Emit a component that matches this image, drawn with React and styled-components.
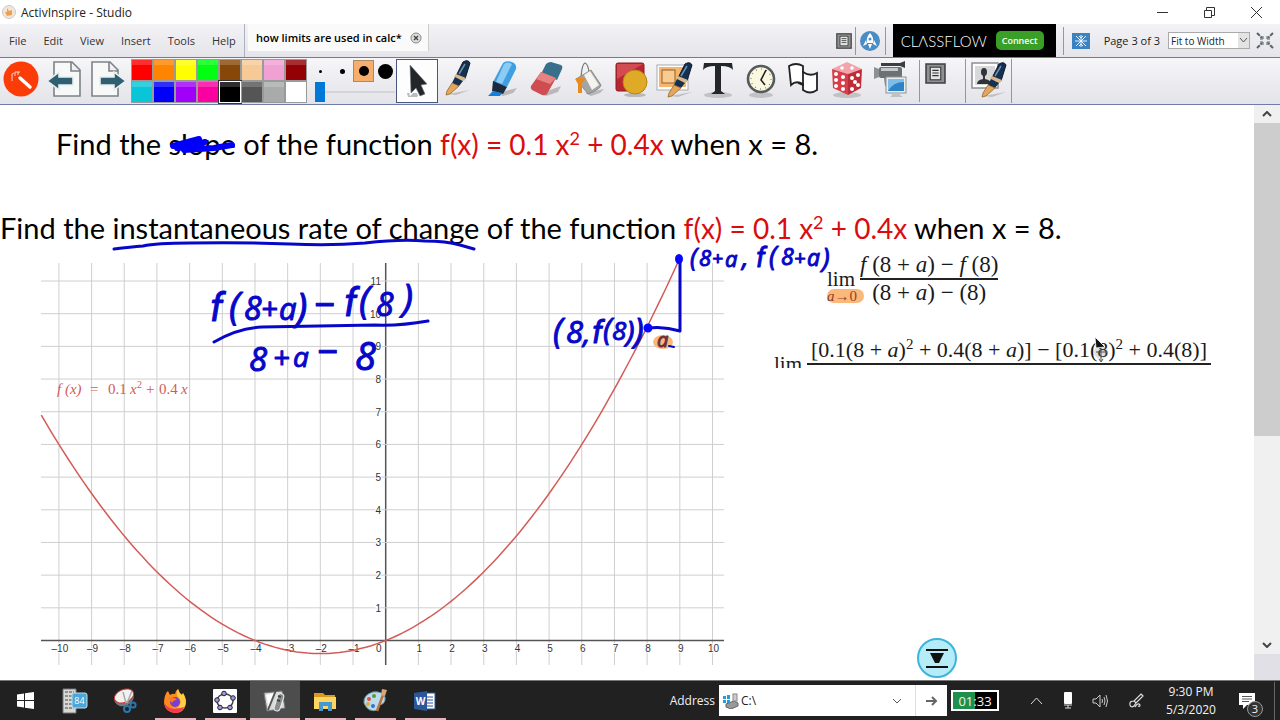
import React from 'react';
import styled, { createGlobalStyle } from 'styled-components';

const GlobalStyle = createGlobalStyle`
  * {
    box-sizing: border-box;
  }

  body {
    margin: 0;
    font-family: "Open Sans", "Noto Sans", sans-serif;
    font-size: 12px;
    color: #222;
    background: #fff;
  }

  button {
    font: inherit;
    color: inherit;
    padding: 0;
    border: 0;
    background: none;
  }

  svg {
    display: block;
    flex: none;
  }
`;

const SWATCHES = [
  '#ff0000', '#ff8500', '#ffff00', '#00ff10', '#874708', '#f6ca96', '#f0a0d2', '#930006',
  '#08c6d8', '#0000fa', '#a000fa', '#fa00a0', '#000000', '#555555', '#a9abaa', '#ffffff',
];

// graph geometry, in board coordinates
const UNIT = 32.68;
const OX = 385.7;
const OY = 640.5;
const gx = (x) => OX + x * UNIT;
const gy = (y) => OY - y * UNIT;
const f = (x) => 0.1 * x * x + 0.4 * x;

const range = (from, to) => Array.from({ length: to - from + 1 }, (_, i) => from + i);

const curve = range(0, 120)
  .map((i) => {
    const x = -10.54 + (i / 120) * 19.54;
    return `${gx(x).toFixed(1)},${gy(f(x)).toFixed(1)}`;
  })
  .join(' ');

/* ---------- toolbar icons ---------- */

const PenShape = () => (
  <g>
    <path d="M6 35 L28 31 L14 36 Z" fill="#999" opacity=".5" />
    <path d="M21 3 Q26 0 28 4 L23 20 L14 17 Z" fill="#16304f" stroke="#0c1b30" />
    <path d="M23 5 L17 15" stroke="#6f8fb0" strokeWidth="1.5" />
    <path d="M14 15 L24 19 L22 22 L12 18 Z" fill="#d9b98a" />
    <path d="M13 18 L21 22 L17 27 L10 24 Z" fill="#16304f" />
    <path d="M10 24 L17 27 L8 35 L4 36 L5 32 Z" fill="#e2a75c" stroke="#8c5a20" strokeWidth=".7" />
  </g>
);

const SettingsIcon = () => (
  <svg width="36" height="36" viewBox="0 0 36 36">
    <circle cx="18" cy="18" r="17.5" fill="#fb3c07" />
    <path d="M17 17 L27 26" stroke="#fff" strokeWidth="3.5" strokeLinecap="round" />
    <path d="M9 20 V13 M12 15 V11 M12 11 H17 M15 14 V11 M9 13 L11 12" stroke="#ffd9c8" fill="none" />
  </svg>
);

const PageIcon = ({ next }) => (
  <svg width="38" height="38" viewBox="0 0 38 38">
    <path
      d="M8 2 H26 L34 10 V36 H8 Z M25 2 V11 H34"
      transform={next ? 'translate(-5 0)' : undefined}
      fill="#f7f8f8" stroke="#7d8385" strokeWidth="1.6"
    />
    <path
      d={next ? 'M11 17 H25 V12 L37 21 L25 30 V25 H11 Z' : 'M27 17 H13 V12 L1 21 L13 30 V25 H27 Z'}
      fill="#2f6072" stroke="#e8eef0" strokeWidth="1.6"
    />
  </svg>
);

const PointerIcon = () => (
  <svg width="36" height="40" viewBox="0 0 36 40">
    <path d="M8 33 L22 33 L18 37 L9 37 Z" fill="#bbb" />
    <path d="M11 5 L28 24 L22 25 L26 34 L21 36 L17 28 L12 33 Z" fill="#22262a" stroke="#fff" strokeWidth="3" />
    <path d="M11 5 L28 24 L22 25 L26 34 L21 36 L17 28 L12 33 Z" fill="#22262a" stroke="#777" strokeWidth=".6" />
  </svg>
);

const PenIcon = () => <svg width="36" height="40" viewBox="0 0 36 40"><PenShape /></svg>;

const HighlighterIcon = () => (
  <svg width="36" height="40" viewBox="0 0 36 40">
    <path d="M12 34 L32 29 L28 34 L18 37 Z" fill="#999" opacity=".6" />
    <path d="M18 4 Q21 1 27 3 Q32 5 31 10 L22 28 L8 23 Z" fill="#3f9fe0" />
    <path d="M19 5 Q23 2 27 5 L17 25 L11 23 Z" fill="#8ccbf5" />
    <path d="M8 22 L22 28 L18 35 L7 32 Z" fill="#1c2a3c" />
    <path d="M3 37 L8 32 L17 34 L15 37 Z" fill="#1680d8" />
  </svg>
);

const EraserIcon = () => (
  <svg width="36" height="40" viewBox="0 0 36 40">
    <path d="M14 34 L33 27 L30 33 L18 37 Z" fill="#999" opacity=".6" />
    <path d="M18 5 Q20 3 23 3 L33 6 Q35 7 34 10 L29 21 L13 15 Z" fill="#38708c" />
    <path d="M13 13 L28 19 L19 35 Q17 37 14 36 L4 31 Q2 29 3 27 Z" fill="#cf4c50" />
    <path d="M13 13 L28 19 L22 25 L8 20 Z" fill="#e68382" />
  </svg>
);

const FillIcon = () => (
  <svg width="36" height="40" viewBox="0 0 36 40">
    <path d="M14 34 L33 30 L29 34 L20 37 Z" fill="#999" opacity=".6" />
    <path d="M10 18 Q11 5 14 4 Q17 5 18 13" fill="none" stroke="#777" strokeWidth="1.2" />
    <path d="M5 20 L20 11 L30 26 Q30 30 17 35 Z" fill="#a4a5a3" stroke="#777" strokeWidth=".7" />
    <path d="M13 16 L19 12 L28 26 L21 31 Z" fill="#f3f3f0" />
    <path d="M4 20 Q10 17 15 20 L11 24 L11 34 L7 34 L7 25 Z" fill="#e88b1c" />
  </svg>
);

const ShapesIcon = () => (
  <svg width="36" height="40" viewBox="0 0 36 40">
    <rect x="2" y="4" width="28" height="28" rx="2" fill="#b92630" stroke="#8f1a22" />
    <path d="M3 5 H29 L3 20 Z" fill="#d34b51" />
    <ellipse cx="21" cy="36" rx="11" ry="2" fill="#999" opacity=".6" />
    <circle cx="21" cy="23" r="12" fill="#deaa28" stroke="#b98414" />
  </svg>
);

const DrawShapeIcon = () => (
  <svg width="38" height="40" viewBox="0 0 38 40">
    <rect x="1" y="6" width="31" height="25" fill="#fff" stroke="#aaa" />
    <rect x="3" y="8" width="27" height="20" fill="#f6b56a" />
    <rect x="6" y="11" width="13" height="13" fill="#fbca8f" stroke="#8b622f" />
    <g transform="translate(8 2)"><PenShape /></g>
  </svg>
);

const TextToolIcon = () => (
  <svg width="36" height="40" viewBox="0 0 36 40">
    <ellipse cx="18" cy="36" rx="14" ry="3" fill="#aaa" opacity=".6" />
    <path d="M4 4 H32 L33 11 Q30 7 21 7 V32 L25 35 H11 L15 32 V7 Q6 7 3 11 Z" fill="#23272b" />
  </svg>
);

const ClockIcon = () => (
  <svg width="36" height="40" viewBox="0 0 36 40">
    <ellipse cx="18" cy="36" rx="12" ry="3" fill="#aaa" opacity=".6" />
    <circle cx="18" cy="20" r="13" fill="#fbf8e0" stroke="#555b5c" strokeWidth="2.6" />
    <circle cx="18" cy="20" r="10" fill="none" stroke="#988" strokeWidth="1.3" strokeDasharray="1 4.2" />
    <path d="M23 11 L18 21 L22 26" fill="none" stroke="#222" strokeWidth="1.6" />
  </svg>
);

const FlagIcon = () => (
  <svg width="36" height="40" viewBox="0 0 36 40">
    <path d="M3 7 Q10 3 17 7 V13 Q24 18 31 14 V31 Q24 36 17 31 V25 Q10 21 5 26 Z" fill="#fff" stroke="#222" strokeWidth="1.8" />
    <path d="M17 12 V26 L12 24" fill="none" stroke="#222" strokeWidth="1.8" />
  </svg>
);

const DiceIcon = () => (
  <svg width="36" height="40" viewBox="0 0 36 40">
    <ellipse cx="18" cy="36" rx="14" ry="3" fill="#aaa" opacity=".6" />
    <path d="M3 10 L18 3 L33 10 L19 15 Z" fill="#f2a4ac" />
    <path d="M3 10 L19 15 V36 L4 29 Z" fill="#d63f49" />
    <path d="M33 10 L19 15 V36 L32 29 Z" fill="#bf2c38" />
    <g fill="#fff">
      <circle cx="13" cy="9" r="1.8" /><circle cx="23" cy="9" r="1.8" />
      <circle cx="7" cy="15" r="2" /><circle cx="14" cy="18" r="2" />
      <circle cx="7" cy="21" r="2" /><circle cx="14" cy="24" r="2" />
      <circle cx="7" cy="27" r="2" /><circle cx="14" cy="30" r="2" />
      <circle cx="23" cy="19" r="2" /><circle cx="29" cy="16" r="2" />
      <circle cx="26" cy="23" r="2" /><circle cx="23" cy="30" r="2" /><circle cx="29" cy="26" r="2" />
    </g>
  </svg>
);

const CameraIcon = () => (
  <svg width="36" height="40" viewBox="0 0 36 40">
    <path d="M2 8 L7 10 V18 L2 20 Z" fill="#8d9192" />
    <rect x="7" y="8" width="23" height="11" rx="2" fill="#6c7172" />
    <rect x="9" y="9" width="17" height="3" fill="#c6c9c9" />
    <path d="M9 4 H28 L33 2 V9 L28 7 H9 Z" fill="#3b3f41" />
    <path d="M12 19 H20 L17 27 H13 Z" fill="#83898a" />
    <rect x="14" y="18" width="20" height="16" fill="#e8ecee" stroke="#8d9396" />
    <rect x="16" y="20" width="16" height="12" fill="#2d83c8" />
    <path d="M16 32 Q21 23 32 23 V20 H16 Z" fill="#7fbce8" />
    <path d="M20 34 H28 V36 L31 38 H18 L20 36 Z" fill="#bcc2c5" />
  </svg>
);

const NotesIcon = ({ size }) => (
  <svg width={size} height={size} viewBox="0 0 20 20">
    <rect x="1" y="1" width="18" height="18" fill="#8f9192" stroke="#46484a" strokeWidth="1.6" />
    <rect x="5" y="4" width="10" height="12" fill="#e4e5e5" stroke="#333" />
    <path d="M7 7 H13 M7 9.5 H13 M7 12 H13" stroke="#333" />
  </svg>
);

const PortraitIcon = () => (
  <svg width="38" height="40" viewBox="0 0 38 40">
    <rect x="2" y="4" width="26" height="25" fill="#fff" stroke="#8c9092" strokeWidth="1.5" />
    <rect x="5" y="7" width="20" height="19" fill="#d6d8d9" />
    <ellipse cx="14" cy="13" rx="3" ry="4" fill="#2f3335" />
    <path d="M7 25 Q7 21 13 20 V16 H15 V20 Q21 21 21 25 Z" fill="#2f3335" />
    <g transform="translate(8 2)"><PenShape /></g>
  </svg>
);

const TOOLS = [
  ['Pen', PenIcon], ['Highlighter', HighlighterIcon], ['Eraser', EraserIcon], ['Fill', FillIcon],
  ['Shapes', ShapesIcon], ['Draw shape', DrawShapeIcon], ['Text', TextToolIcon], ['Clock', ClockIcon],
  ['Flag', FlagIcon], ['Dice', DiceIcon], ['Camera', CameraIcon],
];

/* ---------- window chrome ---------- */

const Window = styled.div`
  display: flex;
  flex-direction: column;
  min-height: 100vh;
  overflow: hidden;
`;

const TitleBar = styled.header`
  display: flex;
  align-items: center;
  height: 24px;
  padding-left: 2px;
  gap: 5px;
  background: #fff;
`;

const WindowButtons = styled.div`
  display: flex;
  margin-left: auto;
`;

const WindowButton = styled.button`
  display: grid;
  place-items: center;
  width: 47px;
  height: 24px;
`;

const MenuRow = styled.div`
  display: flex;
  height: 34px;
  background: linear-gradient(#f3f3f6, #e4e4ea);
  border-bottom: 1px solid #6f7c99;
`;

const Menu = styled.nav`
  display: flex;
  align-items: center;
  gap: 1px;
  width: 245px;
  padding-left: 1px;
  border-right: 1px solid #aab0c0;
`;

const MenuItem = styled.button`
  padding: 0 8px;
  height: 30px;
  color: #333;
  font-size: 11px;
`;

const DocTab = styled.div`
  display: flex;
  align-items: center;
  gap: 8px;
  height: 27px;
  margin-left: 3px;
  padding: 0 6px 0 8px;
  background: #fafafb;
  border-right: 1px solid #ccc;
  font-weight: 600;
  font-size: 11px;
  color: #000;
`;

const MenuRight = styled.div`
  display: flex;
  align-items: center;
  margin-left: auto;
`;

const IconButton = styled.button`
  display: grid;
  place-items: center;
  width: ${(p) => p.$w || 30}px;
  height: 32px;
`;

const Divider = styled.span`
  flex: none;
  width: 1px;
  height: ${(p) => p.$h || 28}px;
  background: #8d97ae;
`;

const ClassFlow = styled.div`
  display: flex;
  align-items: center;
  justify-content: space-between;
  width: 163px;
  height: 33px;
  margin: 0 7px;
  padding: 0 12px 0 8px;
  background: #000;
  color: #fff;
  font-family: Lato, sans-serif;
  font-size: 15px;
  font-weight: 300;
`;

const Connect = styled.button`
  width: 48px;
  height: 19px;
  border-radius: 5px;
  background: #3a9f27;
  color: #fff;
  font-family: "Open Sans", sans-serif;
  font-size: 9px;
  font-weight: 600;
`;

const PageLabel = styled.span`
  margin: 0 8px 0 6px;
  font-size: 11px;
  white-space: nowrap;
`;

const ZoomBox = styled.div`
  position: relative;
  display: flex;

  svg {
    position: absolute;
    right: 1px;
    top: 1px;
    pointer-events: none;
  }
`;

const ZoomSelect = styled.select`
  appearance: none;
  width: 82px;
  height: 17px;
  padding: 0 2px;
  border: 1px solid #aaa;
  border-radius: 0;
  background: #fff;
  font-family: "Open Sans", sans-serif;
  font-size: 10px;
  line-height: 14px;
  color: #222;
`;

const Toolbar = styled.div`
  display: flex;
  align-items: center;
  height: 47px;
  background: linear-gradient(#f6f6f8, #e3e3e9);
  border-bottom: 1px solid #6f7ca8;
`;

const ToolGroup = styled.div`
  display: flex;
  margin-right: ${(p) => p.$gap || 0}px;
`;

const ToolButton = styled.button`
  display: grid;
  place-items: ${(p) => (p.$top ? 'start center' : 'center')};
  width: ${(p) => p.$w || 43}px;
  height: 44px;
  padding: ${(p) => (p.$top ? '4px 0 0' : '0 0 4px')};
  border: ${(p) => (p.$active ? '1px solid #4b5680' : '0')};
  background: ${(p) => (p.$active ? '#fdfdfe' : 'none')};
`;

const Palette = styled.div`
  display: grid;
  grid-template-columns: repeat(8, 22px);
  grid-auto-rows: 22px;
  margin-left: 4px;
`;

const Swatch = styled.button`
  border: 1px solid ${(p) => (p.$selected ? '#fff' : '#9a9a9a')};
  outline: ${(p) => (p.$selected ? '1px solid #333' : '0')};
  background: linear-gradient(#ffffff2e 0 25%, transparent 25%) ${(p) => p.$color};
`;

const PenWidths = styled.div`
  display: flex;
  flex-direction: column;
  width: 86px;
  margin-left: 3px;
`;

const Dots = styled.div`
  display: flex;
  justify-content: space-between;
`;

const DotButton = styled.button`
  display: grid;
  place-items: center;
  width: 21px;
  height: 22px;
  border: ${(p) => (p.$active ? '1px solid #a98a68' : '0')};
  background: ${(p) => (p.$active ? '#f5ae6c' : 'none')};

  &::before {
    content: "";
    width: ${(p) => p.$size}px;
    height: ${(p) => p.$size}px;
    border-radius: 50%;
    background: #000;
  }
`;

const WidthSlider = styled.input`
  appearance: none;
  width: 80px;
  height: 20px;
  margin: 0 0 0 5px;
  background: linear-gradient(transparent 9px, #d3d5da 9px 11px, transparent 11px);

  &::-webkit-slider-thumb {
    appearance: none;
    width: 10px;
    height: 20px;
    background: #0078d7;
  }
`;

/* ---------- board ---------- */

const Workspace = styled.main`
  display: flex;
  flex: 1;
  min-height: 575px;
`;

const Board = styled.section`
  position: relative;
  flex: 1;
  min-width: 0;
  overflow: hidden;
  background: #fff;
`;

const BoardItem = styled.div`
  position: absolute;
  left: ${(p) => p.$x}px;
  top: ${(p) => p.$y}px;
`;

const Prompt = styled.p`
  margin: 0;
  font-family: Lato, "Open Sans", sans-serif;
  font-size: 29px;
  line-height: 36px;
  color: #000;
  white-space: nowrap;

  sup {
    font-size: 18px;
    line-height: 0;
  }
`;

const Red = styled.span`
  font-size: 28px;
  color: #d90d0d;
`;

const Drawing = styled.svg`
  position: absolute;
  left: 0;
  top: 0;
  pointer-events: none;
`;

const Equation = styled.div`
  display: flex;
  align-items: ${(p) => (p.$clipped ? 'flex-start' : 'center')};
  overflow: hidden;
  font-family: "Liberation Serif", serif;
  font-size: ${(p) => (p.$clipped ? 22 : 23)}px;
  line-height: ${(p) => (p.$clipped ? 27 : 26)}px;
  color: #1a1a1a;
  white-space: pre;
  height: ${(p) => (p.$clipped ? '32px' : 'auto')};

  sup {
    font-size: 15px;
    line-height: 0;
  }
`;

const Limit = styled.div`
  display: flex;
  flex-direction: column;
  align-items: flex-start;
  width: 33px;
  font-size: 21px;
  line-height: 20px;
  padding-top: ${(p) => p.$drop}px;
`;

const Approach = styled.span`
  padding-right: 7px;
  border-radius: 7px;
  background: #fcb878;
  color: #93402a;
  font-size: 15px;
  line-height: 14px;
`;

const Fraction = styled.div`
  display: flex;
  flex-direction: column;
  text-align: center;
`;

const Over = styled.span`
  padding: 0 ${(p) => p.$pad || 0}px;
  border-bottom: 2px solid #222;
`;

const PullTab = styled.button`
  position: absolute;
  left: 916px;
  bottom: 1px;
`;

const ScrollBar = styled.div`
  display: flex;
  flex-direction: column;
  align-items: center;
  width: 26px;
  background: #f0f0f0;
`;

const ScrollArrow = styled.button`
  display: grid;
  place-items: center;
  width: 26px;
  height: 18px;
`;

const ScrollTrack = styled.div`
  flex: 1;
  width: 100%;
`;

const ScrollThumb = styled.div`
  height: 61%;
  background: #cdcdcd;
`;

const Corner = styled.div`
  width: 100%;
  height: 26px;
  background: #e0e0e6;
`;

const Graph = () => (
  <>
    {range(-10, 10).map((n) => (
      <line key={`v${n}`} x1={gx(n)} x2={gx(n)} y1="263" y2="665" stroke={n ? '#cfcfcf' : '#555'} strokeWidth={n ? 1 : 1.5} />
    ))}
    {range(0, 11).map((n) => (
      <line key={`h${n}`} x1="41" x2="724" y1={gy(n)} y2={gy(n)} stroke={n ? '#cfcfcf' : '#555'} strokeWidth={n ? 1 : 1.5} />
    ))}
    <g fontFamily="Liberation Sans, sans-serif" fontSize="10" fill="#333" stroke="#fff" strokeWidth="2" paintOrder="stroke">
      {range(-10, 10).map((n) => (
        <text key={n} x={n ? gx(n) + 1 : gx(n) - 7} y="652" textAnchor="middle">{String(n).replace('-', '–')}</text>
      ))}
      {range(1, 11).map((n) => (
        <text key={n} x="381" y={gy(n) + 4} textAnchor="end">{n}</text>
      ))}
    </g>
    <polyline points={curve} fill="none" stroke="#d35b57" strokeWidth="1.5" />
    <text x="57" y="394" fontFamily="Liberation Serif, serif" fontSize="15" fontStyle="italic" fill="#d35b57">
      f (x)
      <tspan x="90" fontStyle="normal">=</tspan>
      <tspan x="108" fontStyle="normal">0.1</tspan>
      <tspan x="130">x</tspan>
      <tspan x="137" y="388" fontSize="10" fontStyle="normal">2</tspan>
      <tspan x="146" y="394" fontStyle="normal">+</tspan>
      <tspan x="159" fontStyle="normal">0.4</tspan>
      <tspan x="181">x</tspan>
    </text>
  </>
);

// handwritten notes: [x, baseline, size, text]
const NOTES = [
  [210, 321, 38, 'f'], [229, 320, 39, '('], [244, 320, 32, '8'], [261, 319, 29, '+'], [279, 320, 31, 'a'], [296, 322, 40, ')'],
  [314, 318, 38, '−'],
  [344, 316, 38, 'f'], [359, 314, 39, '('], [376, 316, 32, '8'], [402, 312, 39, ')'],
  [249, 371, 33, '8'], [273, 368, 29, '+'], [293, 367, 28, 'a'],
  [317, 365, 38, '−'],
  [355, 370, 38, '8'],
  [553, 343, 34, '('], [566, 343, 31, '8'], [583, 343, 30, ','], [592, 343, 31, 'f'], [603, 340, 31, '('],
  [612, 340, 26, '8'], [626, 342, 30, ')'], [634, 343, 34, ')'],
  [690, 266, 25, '('], [699, 266, 22, '8'], [712, 265, 19, '+'], [725, 267, 22, 'a'], [742, 267, 26, ','],
  [756, 267, 27, 'f'], [769, 266, 27, '('], [781, 265, 23, '8'], [794, 265, 20, '+'], [807, 266, 23, 'a'], [822, 268, 27, ')'],
];

const Ink = () => (
  <g fill="none" stroke="#0707c9" strokeLinecap="round" strokeLinejoin="round" strokeWidth="3">
    <path d="M173 146 L199 139 L177 148 L205 142 L184 150 L214 148 L232 145" strokeWidth="6" stroke="#0000fa" />
    <path d="M114 249 Q131 247 143 246 Q156 243 190 243 Q240 242 290 244 Q330 246 365 243 Q400 239 425 241 Q446 241 460 245 L474 249" />
    <path d="M214 342 Q238 328 262 327 Q320 326 375 325 Q400 326 428 321" />
    <path d="M648 328 Q664 326 680 331 L680 260" />
    <ellipse cx="679" cy="259" rx="3" ry="4" fill="#0707ff" stroke="#0707ff" strokeWidth="2" />
    <ellipse cx="648" cy="328" rx="3" ry="3" fill="#0707ff" stroke="#0707ff" />
    <ellipse cx="663" cy="342" rx="10" ry="7" fill="#fcb878" stroke="none" />
    <path d="M669 346 L674 347" strokeWidth="2" />
    <g fontFamily="Open Sans, sans-serif" fontStyle="italic" fill="#0707c9" strokeWidth="1">
      {NOTES.map(([x, y, size, text]) => (
        <text key={`${x}-${y}`} x={x} y={y} fontSize={size} fontFamily={text === 'f' ? 'Roboto, sans-serif' : undefined}>{text}</text>
      ))}
      <text x="657" y="347" fontSize="20" fill="#6c3042" stroke="#6c3042">a</text>
    </g>
  </g>
);

const BoardCursor = () => (
  <g>
    <circle cx="1101" cy="352" r="7" fill="#888" opacity=".25" />
    <path d="M1096 352 H1107 M1101 348 V361 M1099 359 L1101 362 L1103 359" stroke="#555" fill="none" />
    <path d="M1095 337 L1105 347 L1096 348 Z" fill="#111" stroke="#fff" strokeWidth=".8" />
  </g>
);

/* ---------- taskbar ---------- */

const TaskBar = styled.footer`
  display: flex;
  align-items: center;
  height: 40px;
  background: #212121;
  border-top: 1px solid #777;
  color: #f2f2f2;
`;

const TaskButton = styled.button`
  display: grid;
  place-items: center;
  width: 50px;
  height: 39px;
  background: ${(p) => (p.$active ? '#4d4d4d' : 'none')};
  box-shadow: ${(p) => (p.$active ? 'inset 0 -2px #efb7c1' : 'none')};
  background-image: ${(p) => (p.$open ? 'linear-gradient(#e9b3bd, #e9b3bd)' : 'none')};
  background-size: 41px 2px;
  background-position: center bottom;
  background-repeat: no-repeat;
`;

const Address = styled.label`
  display: flex;
  align-items: center;
  gap: 4px;
  margin-left: auto;
`;

const AddressBox = styled.span`
  display: flex;
  align-items: center;
  width: 228px;
  height: 31px;
  padding-left: 3px;
  gap: 2px;
  background: #fff;
  color: #222;
`;

const AddressInput = styled.input`
  flex: 1;
  min-width: 0;
  border: 0;
  padding: 0;
  background: none;
  font: inherit;
  color: #222;
`;

const GoButton = styled.button`
  display: grid;
  place-items: center;
  width: 32px;
  height: 31px;
  border-left: 1px solid #ddd;
`;

const Battery = styled.div`
  display: grid;
  place-items: center;
  width: 48px;
  height: 21px;
  margin: 0 21px 0 4px;
  border: 2px solid #fff;
  background: linear-gradient(90deg, #1f8f4c 50%, #000 50%);
  font-size: 13px;
  line-height: 16px;
`;

const Tray = styled.div`
  display: flex;
  align-items: center;
`;

const Clock = styled.div`
  width: 72px;
  text-align: center;
  font-size: 12px;
  line-height: 18px;
`;

const Badge = styled.span`
  position: absolute;
  right: 11px;
  bottom: 3px;
  width: 16px;
  height: 16px;
  border: 1px solid #999;
  border-radius: 50%;
  background: #333;
  font-size: 11px;
  line-height: 14px;
`;

const NoticeButton = styled.button`
  position: relative;
  display: flex;
  align-items: center;
  width: 42px;
  height: 38px;
  padding-left: 5px;
  margin: 0 5px 0 6px;
  border-right: 1px solid #666;
`;

const TASKS = [
  ['Start', '', (
    <svg width="17" height="17" viewBox="0 0 17 17"><path d="M0 2.4 L7 1.4 V8 H0 Z M8 1.2 L17 0 V8 H8 Z M0 9 H7 V15.6 L0 14.6 Z M8 9 H17 V17 L8 15.8 Z" fill="#fff" /></svg>
  )],
  ['TI-84', '', (
    <svg width="26" height="26" viewBox="0 0 26 26">
      <path d="M1 1 H14 V25 H1 Z" fill="#d8d9d6" stroke="#777" />
      <path d="M3 4 H12 M3 8 H12 M3 12 H12 M3 16 H12 M3 20 H12" stroke="#777" strokeWidth="1.5" strokeDasharray="3 1" />
      <rect x="10" y="5" width="15" height="15" rx="2" fill="#4da5d8" stroke="#b9e1f4" />
      <text x="17.5" y="16" fontSize="9" fill="#fff" textAnchor="middle">84</text>
    </svg>
  )],
  ['Snip', '', (
    <svg width="24" height="26" viewBox="0 0 24 26">
      <ellipse cx="11" cy="10" rx="10" ry="8" fill="#777" transform="rotate(-22 11 10)" />
      <ellipse cx="11" cy="8" rx="10" ry="6.5" fill="#f1f1f1" stroke="#c33" transform="rotate(-22 11 8)" />
      <path d="M10 4 L13 15 M19 3 L14 15" stroke="#aaa" strokeWidth="1.5" />
      <g fill="none" stroke="#2878ae" strokeWidth="2"><circle cx="14" cy="21" r="3" /><circle cx="20" cy="17" r="2.6" /></g>
    </svg>
  )],
  ['Firefox', 'open', (
    <svg width="24" height="26" viewBox="0 0 24 26">
      <path d="M2 8 Q3 4 5 3 L7 7 Q10 5 12 6 Q12 3 15 1 Q16 5 19 7 L20 5 Q24 11 23 16 Q21 25 12 25 Q2 24 1 15 Q1 11 2 8 Z" fill="#ff8a1d" />
      <path d="M15 1 Q16 5 19 7 L20 5 Q24 12 22 18 Q18 23 14 20 Q20 15 16 10 Q12 7 15 1 Z" fill="#ffd044" />
      <path d="M1 14 Q4 21 12 21 Q18 20 21 19 Q18 25 12 25 Q2 24 1 14 Z" fill="#f53a55" />
      <circle cx="12" cy="14" r="5" fill="#7b3fd0" />
      <path d="M5 10 Q11 8 14 12 Q10 12 9 15 Z" fill="#ff7a20" />
    </svg>
  )],
  ['GeoGebra', 'open', (
    <svg width="24" height="24" viewBox="0 0 24 24">
      <rect width="24" height="24" rx="1" fill="#fff" />
      <ellipse cx="12" cy="12" rx="8" ry="7" fill="none" stroke="#444" strokeWidth="1.5" />
      <g fill="#9999ee" stroke="#222">
        <circle cx="11" cy="4.5" r="2.3" /><circle cx="20" cy="9" r="2.3" /><circle cx="4" cy="11" r="2.3" />
        <circle cx="17" cy="18.5" r="2.3" /><circle cx="7" cy="18.5" r="2.3" />
      </g>
    </svg>
  )],
  ['ActivInspire', 'active', (
    <svg width="26" height="26" viewBox="0 0 26 26">
      <path d="M2 5 L20 3 L23 20 L5 23 Z" fill="#d9dcd9" stroke="#777" />
      <path d="M4 7 L12 5 L7 21 Z" fill="#fff" />
      <path d="M14 2 L6 22" stroke="#555" strokeWidth="2" />
      <rect x="14" y="5" width="6" height="18" rx="3" fill="#888d8f" stroke="#eee" transform="rotate(18 16 14)" />
      <path d="M16 8 L19 9 M15 12 L18 13" stroke="#444" strokeWidth="2" />
    </svg>
  )],
  ['Files', 'open', (
    <svg width="24" height="24" viewBox="0 0 24 24">
      <path d="M1 4 H10 L12 6 H22 V19 H1 Z" fill="#d9981f" />
      <path d="M1 8 H23 V20 H1 Z" fill="#fcd563" />
      <path d="M6 13 H19 V22 H15 V17 H10 V22 H6 Z" fill="#4599cf" />
    </svg>
  )],
  ['Paint', 'open', (
    <svg width="26" height="26" viewBox="0 0 26 26">
      <path d="M2 15 Q1 7 11 4 Q20 3 23 9 Q24 16 17 17 Q15 19 16 22 Q6 25 2 15 Z" fill="#bcdcec" stroke="#7395a6" />
      <circle cx="7" cy="11" r="2" fill="#dc4f55" /><circle cx="12" cy="8" r="2" fill="#559d3b" />
      <circle cx="6" cy="16" r="2" fill="#e3b22b" /><circle cx="11" cy="18" r="2" fill="#3177c2" />
      <path d="M15 23 L21 7" stroke="#bc7140" strokeWidth="2.5" />
      <path d="M19 7 L20 1 L25 2 L23 8 Z" fill="#d8a873" />
    </svg>
  )],
  ['Word', 'open', (
    <svg width="24" height="24" viewBox="0 0 24 24">
      <rect x="12" y="4" width="10" height="16" fill="#fff" stroke="#2b579a" />
      <path d="M14 8 H20 M14 11 H20 M14 14 H20 M14 17 H20" stroke="#2b579a" />
      <path d="M1 4 L14 2 V22 L1 20 Z" fill="#2b579a" />
      <text x="7.5" y="16" fontSize="10" fontWeight="700" fill="#fff" textAnchor="middle">W</text>
    </svg>
  )],
];

const App = () => {
  return (
    <Window>
      <GlobalStyle />
      <TitleBar>
        <svg width="14" height="14" viewBox="0 0 14 14">
          <circle cx="7" cy="7" r="6.5" fill="#f0e6dc" stroke="#d0c8c0" />
          <path d="M5 11 L3 7 L5 7 V3 L7 6 L10 5 V10 Z" fill="#efa04d" />
        </svg>
        <span>ActivInspire - Studio</span>
        <WindowButtons>
          <WindowButton aria-label="Minimize"><svg width="11" height="11"><path d="M0 5.5 H11" stroke="#333" /></svg></WindowButton>
          <WindowButton aria-label="Restore">
            <svg width="11" height="11"><path d="M.5 3.5 H7.5 V10.5 H.5 Z M2.5 3 V.5 H10.5 V8.5 H8" fill="none" stroke="#333" /></svg>
          </WindowButton>
          <WindowButton aria-label="Close"><svg width="11" height="11"><path d="M0 0 L11 11 M11 0 L0 11" stroke="#333" /></svg></WindowButton>
        </WindowButtons>
      </TitleBar>

      <MenuRow>
        <Menu>
          {['File', 'Edit', 'View', 'Insert', 'Tools', 'Help'].map((m) => <MenuItem key={m}>{m}</MenuItem>)}
        </Menu>
        <DocTab>
          how limits are used in calc*
          <button aria-label="Close tab">
            <svg width="12" height="12" viewBox="0 0 12 12">
              <circle cx="6" cy="6" r="5" fill="#ddd" stroke="#888" />
              <path d="M4 4 L8 8 M8 4 L4 8" stroke="#444" strokeWidth="1.4" />
            </svg>
          </button>
        </DocTab>
        <MenuRight>
          <IconButton $w={22} aria-label="Browsers"><NotesIcon size={16} /></IconButton>
          <Divider />
          <IconButton $w={29} aria-label="Launch">
            <svg width="20" height="20" viewBox="0 0 20 20">
              <circle cx="10" cy="10" r="10" fill="#4a8cc4" />
              <path d="M10 2 Q14 6 13 12 H7 Q6 6 10 2 Z M6 9 L3 15 L7 13 Z M14 9 L17 15 L13 13 Z M8 13 H12 L10 18 Z" fill="#fff" />
              <circle cx="10" cy="8" r="1.5" fill="#4a8cc4" />
            </svg>
          </IconButton>
          <Divider />
          <ClassFlow>
            <span>CLΛSSFLOW</span>
            <Connect>Connect</Connect>
          </ClassFlow>
          <Divider />
          <IconButton $w={34} aria-label="Freeze">
            <svg width="18" height="16" viewBox="0 0 18 16">
              <rect width="18" height="16" fill="#3c82c0" />
              <path d="M9 2 V14 M3 8 H15 M4 3 L14 13 M14 3 L4 13 M7 3 L9 5 L11 3 M7 13 L9 11 L11 13" stroke="#e8f4ff" fill="none" />
            </svg>
          </IconButton>
          <PageLabel>Page 3 of 3</PageLabel>
          <ZoomBox>
            <ZoomSelect aria-label="Zoom" defaultValue="Fit to Width"><option>Fit to Width</option></ZoomSelect>
            <svg width="11" height="15"><rect width="11" height="15" fill="#e3e3e3" /><path d="M2 5 L5.5 9 L9 5" stroke="#555" fill="none" /></svg>
          </ZoomBox>
          <IconButton $w={30} aria-label="Full screen">
            <svg width="18" height="17" viewBox="0 0 18 17">
              <path d="M1 1 L6 6 M17 1 L12 6 M1 16 L6 11 M17 16 L12 11" stroke="#5a6468" strokeWidth="2" strokeDasharray="4 1" />
              <path d="M7 4 V7 H4 M11 4 V7 H14 M7 13 V10 H4 M11 13 V10 H14" stroke="#5a6468" fill="none" />
            </svg>
          </IconButton>
        </MenuRight>
      </MenuRow>

      <Toolbar>
        <ToolButton $w={42} aria-label="Menu"><SettingsIcon /></ToolButton>
        <ToolButton $w={46} aria-label="Previous page"><PageIcon /></ToolButton>
        <ToolButton $w={39} aria-label="Next page"><PageIcon next /></ToolButton>
        <Palette>
          {SWATCHES.map((c) => <Swatch key={c} $color={c} $selected={c === '#000000'} aria-label={c} />)}
        </Palette>
        <PenWidths>
          <Dots>
            {[3, 5, 10, 15].map((s) => <DotButton key={s} $size={s} $active={s === 10} aria-label={`Width ${s}`} />)}
          </Dots>
          <WidthSlider type="range" min="0" max="100" defaultValue="0" aria-label="Pen width" />
        </PenWidths>
        <ToolButton $active $w={42} aria-label="Select"><PointerIcon /></ToolButton>
        <ToolGroup $gap={8}>
          {TOOLS.map(([label, Icon]) => (
            <ToolButton key={label} aria-label={label}><Icon /></ToolButton>
          ))}
        </ToolGroup>
        <Divider $h={42} />
        <ToolGroup $gap={15}>
          <ToolButton $top $w={30} aria-label="Notes"><NotesIcon size={21} /></ToolButton>
        </ToolGroup>
        <Divider $h={44} />
        <ToolButton $w={45} aria-label="Desktop annotate"><PortraitIcon /></ToolButton>
        <Divider $h={44} />
      </Toolbar>

      <Workspace>
        <Board>
          <BoardItem as={Prompt} $x={56} $y={21}>
            Find the slope of the function <Red>f(x) = 0.1 x<sup>2</sup> + 0.4x</Red> when x = 8.
          </BoardItem>
          <BoardItem as={Prompt} $x={0} $y={105}>
            Find the instantaneous rate of change of the function <Red>f(x) = 0.1 x<sup>2</sup> + 0.4x</Red> when x = 8.
          </BoardItem>
          <BoardItem $x={827} $y={147}>
            <Equation>
              <Limit $drop={13}>
                lim
                <Approach><i>a</i>→0</Approach>
              </Limit>
              <Fraction>
                <Over><i>f</i> (8 + <i>a</i>) − <i>f</i> (8)</Over>
                <span>(8 + <i>a</i>) − (8)</span>
              </Fraction>
            </Equation>
          </BoardItem>
          <BoardItem $x={774} $y={231}>
            <Equation $clipped>
              <Limit $drop={18}>lim</Limit>
              <Fraction>
                <Over $pad={4}>[0.1(8 + <i>a</i>)<sup>2</sup> + 0.4(8 + <i>a</i>)] − [0.1(8)<sup>2</sup> + 0.4(8)]</Over>
              </Fraction>
            </Equation>
          </BoardItem>
          <Drawing width="1254" height="575" viewBox="0 105 1254 575">
            <Graph />
            <Ink />
            <BoardCursor />
          </Drawing>
          <PullTab aria-label="Extend page">
            <svg width="42" height="42" viewBox="0 0 42 42">
              <circle cx="21" cy="21" r="19" fill="#b5ecf8" stroke="#3cb4dc" strokeWidth="2" />
              <path d="M10 13 H32 M10 30 H32" stroke="#111" strokeWidth="2" />
              <path d="M14 16 H28 L23 26 H19 Z" fill="#111" />
            </svg>
          </PullTab>
        </Board>
        <ScrollBar>
          <ScrollArrow aria-label="Scroll up"><svg width="10" height="6"><path d="M1 5 L5 1 L9 5" stroke="#444" strokeWidth="2" fill="none" /></svg></ScrollArrow>
          <ScrollTrack><ScrollThumb /></ScrollTrack>
          <ScrollArrow aria-label="Scroll down"><svg width="10" height="6"><path d="M1 1 L5 5 L9 1" stroke="#444" strokeWidth="2" fill="none" /></svg></ScrollArrow>
          <Corner />
        </ScrollBar>
      </Workspace>

      <TaskBar>
        {TASKS.map(([label, state, icon]) => (
          <TaskButton key={label} $active={state === 'active'} $open={state === 'open'} aria-label={label}>{icon}</TaskButton>
        ))}
        <Address>
          Address
          <AddressBox>
            <svg width="17" height="16" viewBox="0 0 17 16">
              <path d="M4 11 L12 8 L16 10 V13 L9 16 L4 14 Z" fill="#999" stroke="#666" />
              <path d="M1 3 H4 V6 H1 Z M5 2 H8 V6 H5 Z M1 7 H4 V10 H1 Z M5 7 H8 V10 H5 Z" fill="#239cd8" />
              <rect x="11" y="1" width="4" height="7" fill="#ccc" stroke="#888" />
            </svg>
            <AddressInput defaultValue="C:\" />
            <svg width="26" height="10"><path d="M6 3 L10 7 L14 3" stroke="#555" fill="none" /></svg>
            <GoButton aria-label="Go"><svg width="12" height="10"><path d="M0 5 H10 M6 1 L10 5 L6 9" stroke="#666" strokeWidth="2" fill="none" /></svg></GoButton>
          </AddressBox>
        </Address>
        <Battery>01:33</Battery>
        <Tray>
          <IconButton $w={32} aria-label="Hidden icons"><svg width="13" height="8"><path d="M1 7 L6.5 1 L12 7" stroke="#ddd" fill="none" /></svg></IconButton>
          <IconButton $w={31} aria-label="Microphone">
            <svg width="10" height="17"><rect x="1" y="0" width="8" height="12" rx="1" fill="#fff" /><path d="M1 13 H9 M5 13 V16 M2 16 H8" stroke="#ddd" /></svg>
          </IconButton>
          <IconButton $w={34} aria-label="Volume">
            <svg width="16" height="14"><path d="M1 5 H4 L8 1 V13 L4 9 H1 Z M10 5 Q11 7 10 9 M12 3 Q14 7 12 11 M14 1 Q17 7 14 13" stroke="#ccc" fill="none" /></svg>
          </IconButton>
          <IconButton $w={38} aria-label="Pen workspace">
            <svg width="16" height="16"><path d="M13 1 L15 3 L8 10 L6 8 Z M6 8 Q1 8 2 12 Q3 15 6 13 L8 10 M7 14 Q10 9 12 12 Q12 14 10 13" stroke="#ddd" fill="none" strokeWidth="1.2" /></svg>
          </IconButton>
          <Clock>9:30 PM<br />5/3/2020</Clock>
          <NoticeButton aria-label="Notifications">
            <svg width="18" height="18" viewBox="0 0 18 18">
              <path d="M1 1 H17 V13 H9 L5 17 V13 H1 Z" fill="#fff" />
              <path d="M4 4.5 H14 M4 7 H14 M4 9.5 H11" stroke="#555" />
            </svg>
            <Badge>3</Badge>
          </NoticeButton>
        </Tray>
      </TaskBar>
    </Window>
  );
}

export default App;
